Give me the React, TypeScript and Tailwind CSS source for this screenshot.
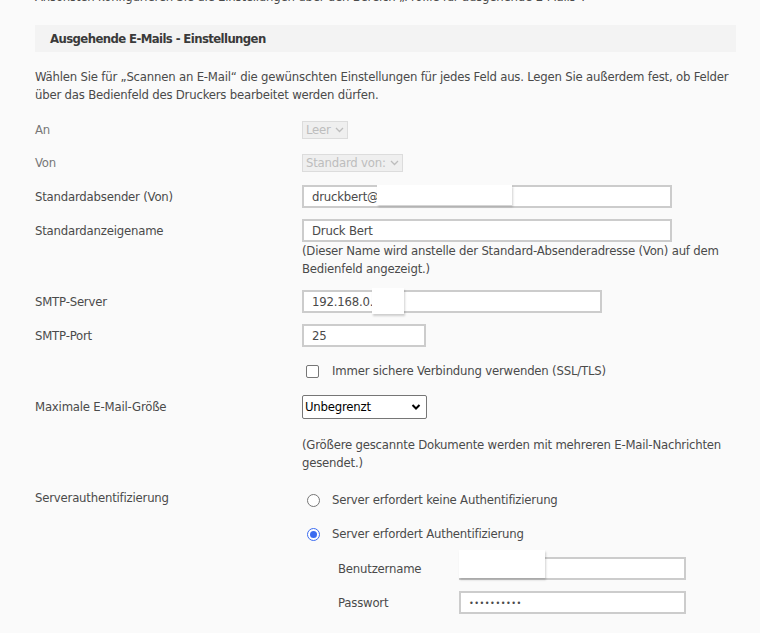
import React from 'react';

const font = { fontFamily: '"DejaVu Sans Condensed", "Liberation Sans", sans-serif' };

function Row({ label, children, className = '', labelClass = '' }: { label: string; children: React.ReactNode; className?: string; labelClass?: string }) {
  return (
    <div className={`flex ${className}`}>
      <div className={`w-[267px] shrink-0 ${labelClass}`}>{label}</div>
      <div className="flex-1">{children}</div>
    </div>
  );
}

function TextBox({ value, width, type = 'text' }: { value: string; width: string; type?: string }) {
  return (
    <input
      type={type}
      readOnly
      defaultValue={value}
      className={`${width} block h-[23px] border-2 border-[#cccccc] bg-white px-[8px] ${type === 'password' ? 'text-[9px] tracking-[0.5px]' : 'text-[13px] tracking-[-0.2px]'} text-[#4a4a4a] outline-none`}
      style={font}
    />
  );
}

// white patch that hides a value (sits over the field)
function Patch({ className }: { className: string }) {
  return <div className={`absolute bg-white shadow-[1px_2px_2px_rgba(0,0,0,0.18)] ${className}`} />;
}

function Chevron({ color }: { color: string }) {
  return (
    <svg width="9" height="6" viewBox="0 0 9 6">
      <path d="M1 1 4.5 4.5 8 1" fill="none" stroke={color} strokeWidth="1.3" />
    </svg>
  );
}

export default function App() {
  return (
    <div className="min-h-screen overflow-hidden bg-[#fafafa] text-[13px] leading-[18px] tracking-[-0.2px] text-[#4a4a4a]" style={font}>
      <div className="pl-[35px] pr-[24px]">
        <p className="-mt-[12px] h-[18px] whitespace-nowrap">
          Ansonsten konfigurieren Sie die Einstellungen über den Bereich „Profile für ausgehende E-Mails“.
        </p>

        <div className="mt-[19px] flex h-[27px] items-center bg-[#f3f3f3] px-[15px] font-bold tracking-[-0.6px] text-[#3a3a3a]">
          Ausgehende E-Mails - Einstellungen
        </div>

        <p className="mt-[16px] whitespace-nowrap">
          Wählen Sie für „Scannen an E-Mail“ die gewünschten Einstellungen für jedes Feld aus. Legen Sie außerdem fest, ob Felder
          <br />
          über das Bedienfeld des Druckers bearbeitet werden dürfen.
        </p>

        <div className="flex flex-col">
          <Row label="An" className="mt-[17px] items-center text-[#777]">
            <div className="inline-flex h-[18px] items-center gap-[4px] border border-[#dcdcdc] bg-[#efefef] px-[3px] text-[#bdbdbd]">
              Leer
              <Chevron color="#bdbdbd" />
            </div>
          </Row>

          <Row label="Von" className="mt-[15px] items-center text-[#777]">
            <div className="inline-flex h-[18px] items-center gap-[4px] border border-[#dcdcdc] bg-[#efefef] px-[3px] text-[#bdbdbd]">
              Standard von:
              <Chevron color="#bdbdbd" />
            </div>
          </Row>

          <Row label="Standardabsender (Von)" className="mt-[13px] items-center">
            <div className="relative">
              <TextBox value="druckbert@" width="w-[370px]" />
              <Patch className="left-[75px] top-0 h-[20px] w-[135px]" />
            </div>
          </Row>

          <Row label="Standardanzeigename" className="mt-[11px] items-start" labelClass="pt-[3px]">
            <TextBox value="Druck Bert" width="w-[370px]" />
            <p className="whitespace-nowrap">
              (Dieser Name wird anstelle der Standard-Absenderadresse (Von) auf dem
              <br />
              Bedienfeld angezeigt.)
            </p>
          </Row>

          <Row label="SMTP-Server" className="mt-[12px] items-center">
            <div className="relative">
              <TextBox value="192.168.0." width="w-[300px]" />
              <Patch className="left-[70px] -top-[2px] h-[26px] w-[32px]" />
            </div>
          </Row>

          <Row label="SMTP-Port" className="mt-[11px] items-center">
            <TextBox value="25" width="w-[124px]" />
          </Row>

          <div className="mt-[15px] flex h-[18px] items-center pl-[271px]">
            <span className="h-[13px] w-[13px] rounded-[2px] border border-[#767676] bg-white" />
            <span className="ml-[13px]">Immer sichere Verbindung verwenden (SSL/TLS)</span>
          </div>

          <Row label="Maximale E-Mail-Größe" className="mt-[15px] items-start" labelClass="pt-[3px]">
            <div className="flex h-[24px] w-[125px] items-center justify-between rounded-[2px] border border-[#767676] bg-white pl-[2px] pr-[5px] text-black">
              Unbegrenzt
              <svg width="10" height="8" viewBox="0 0 10 8">
                <path d="M1.5 2 5 5.5 8.5 2" fill="none" stroke="#000" strokeWidth="2" />
              </svg>
            </div>
            <p className="mt-[17px] whitespace-nowrap">
              (Größere gescannte Dokumente werden mit mehreren E-Mail-Nachrichten
              <br />
              gesendet.)
            </p>
          </Row>

          <Row label="Serverauthentifizierung" className="mt-[17px] items-start">
            <div className="flex flex-col">
              <div className="mt-[2px] flex h-[18px] items-center">
                <span className="ml-[5px] h-[13px] w-[13px] rounded-full border border-[#767676] bg-white" />
                <span className="ml-[12px]">Server erfordert keine Authentifizierung</span>
              </div>
              <div className="mt-[16px] flex h-[18px] items-center">
                <span className="ml-[5px] flex h-[13px] w-[13px] items-center justify-center rounded-full border border-[#3b6cf0] bg-white">
                  <span className="h-[7px] w-[7px] rounded-full bg-[#3b6cf0]" />
                </span>
                <span className="ml-[12px]">Server erfordert Authentifizierung</span>
              </div>

              <div className="mt-[14px] flex items-center">
                <span className="w-[157px] pl-[36px]">Benutzername</span>
                <div className="relative">
                  <TextBox value="" width="w-[227px]" />
                  <Patch className="left-0 -top-[7px] h-[28px] w-[86px]" />
                </div>
              </div>
              <div className="mt-[11px] flex items-center">
                <span className="w-[157px] pl-[36px]">Passwort</span>
                <TextBox value="password12" type="password" width="w-[227px]" />
              </div>
            </div>
          </Row>
        </div>
      </div>
    </div>
  );
}
